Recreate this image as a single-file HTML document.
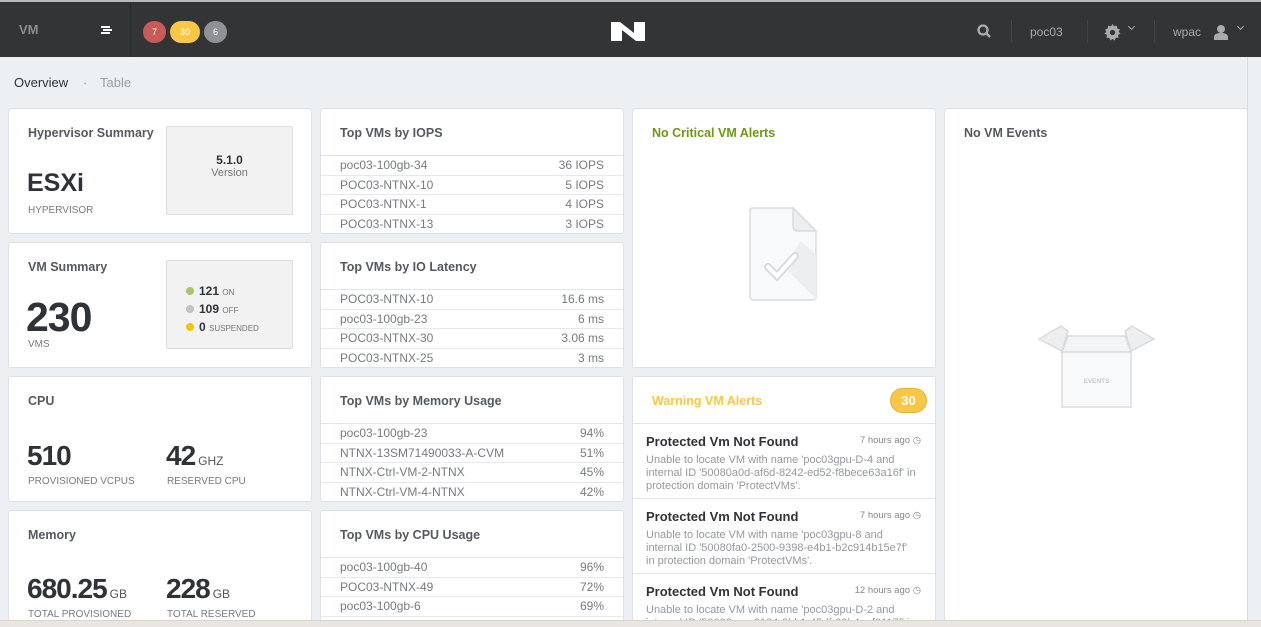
<!DOCTYPE html>
<html><head><meta charset="utf-8"><style>
*{box-sizing:border-box;margin:0;padding:0}
html,body{width:1261px;height:627px;overflow:hidden}
body{background:#edf0f3;font-family:"Liberation Sans",sans-serif;position:relative;color:#333}
.hdr{position:absolute;left:0;top:0;width:1261px;height:57px;background:#333436;border-top:2px solid #b8b8b8}
.ab{position:absolute}
.card{position:absolute;background:#fff;border:1px solid #dde1e5;border-radius:3px;overflow:hidden}
.t{position:absolute;left:19px;top:17px;font-size:12.5px;font-weight:bold;color:#555a60}
.tbl{position:absolute;left:0;right:0;top:46px;border-top:1px solid #e2e5e8}
.tbl div{height:19.6px;border-bottom:1px solid #e6e8eb;padding:0 19px;font-size:12px;color:#777b80;line-height:19px;display:flex;justify-content:space-between}
.big{font-weight:bold;color:#2f3338;letter-spacing:-1px}
.u{font-size:12px;font-weight:normal;color:#555;letter-spacing:0;margin-left:3px}
.lab{font-size:10px;color:#777b80}
.alert{position:absolute;left:0;right:0;height:75px;border-bottom:1px solid #e2e5e8;padding:9px 13px}
.alert b{font-size:13px;color:#2f3338}
.alert .tm{position:absolute;right:14px;top:11px;font-size:9.5px;color:#888}
.alert p{font-size:11px;color:#95999e;line-height:13px;margin-top:3px;width:270px}
.chev{position:absolute;top:22px;width:5px;height:5px;border-right:1.3px solid #a8abaf;border-bottom:1.3px solid #a8abaf;transform:rotate(45deg)}
</style></head><body>
<div class="hdr">
 <div class="ab" style="left:19px;top:20px;color:#8a8d91;font-size:13px;font-weight:bold">VM</div>
 <div class="ab" style="left:101px;top:24px;width:9px;height:2px;background:#fff;box-shadow:2px 3px 0 #fff,0 6px 0 #fff"></div>
 <div class="ab" style="left:130px;top:0;width:1px;height:55px;background:#2a2b2d"></div>
 <div class="ab" style="left:143px;top:19px;width:23px;height:22px;border-radius:11px;background:#c95a5a;color:#fff;font-size:9px;text-align:center;line-height:22px">7</div>
 <div class="ab" style="left:170px;top:19px;width:30px;height:22px;border-radius:11px;background:#f8c745;color:#fff;font-size:9px;text-align:center;line-height:22px">30</div>
 <div class="ab" style="left:204px;top:19px;width:23px;height:22px;border-radius:11px;background:#8e9195;color:#fff;font-size:9px;text-align:center;line-height:22px">6</div>
 <svg class="ab" style="left:611px;top:20px" width="34" height="19"><path d="M0 0h9l14 11V0h11v19h-9L11 8v11H0z" fill="#fff"/></svg>
 <svg class="ab" style="left:977px;top:22px" width="15" height="15"><circle cx="6" cy="6" r="4.5" stroke="#a8abaf" stroke-width="2.3" fill="none"/><path d="M9 9l4 4" stroke="#a8abaf" stroke-width="2.5"/></svg>
 <div class="ab" style="left:1011px;top:18px;width:1px;height:22px;background:#444"></div>
 <div class="ab" style="left:1030px;top:23px;color:#a8abaf;font-size:12px">poc03</div>
 <div class="ab" style="left:1087px;top:18px;width:1px;height:22px;background:#444"></div>
 <svg class="ab" style="left:1104px;top:22px" width="17" height="17" viewBox="0 0 16 16"><path d="M8 0l1.5 2.2 2.6-.8.3 2.7 2.6.9-1.2 2.4L15.6 9l-2.4 1.2.5 2.7-2.7.1-1 2.5L8 14l-2 1.5-1-2.5-2.7-.1.5-2.7L.4 9l1.8-1.6L1 5l2.6-.9.3-2.7 2.6.8z" fill="#a8abaf"/><circle cx="8" cy="8" r="2.5" fill="#333436"/></svg>
 <div class="chev" style="left:1129px"></div>
 <div class="ab" style="left:1154px;top:18px;width:1px;height:22px;background:#444"></div>
 <div class="ab" style="left:1173px;top:23px;color:#a8abaf;font-size:12px">wpac</div>
 <svg class="ab" style="left:1213px;top:22px" width="16" height="16"><circle cx="8" cy="5" r="4" fill="#a8abaf"/><path d="M1 16v-3c0-3 3-4 7-4s7 1 7 4v3z" fill="#a8abaf"/></svg>
 <div class="chev" style="left:1238px"></div>
</div>
<div class="ab" style="left:14px;top:75px;font-size:13px;color:#2f3338">Overview</div>
<div class="ab" style="left:83px;top:75px;font-size:13px;color:#999">·</div>
<div class="ab" style="left:100px;top:75px;font-size:13px;color:#9a9ea3">Table</div>

<div class="card" style="left:8px;top:108px;width:304px;height:126px">
 <div class="t">Hypervisor Summary</div>
 <div class="ab big" style="left:18px;top:60px;font-size:25px;letter-spacing:0">ESXi</div>
 <div class="ab lab" style="left:19px;top:96px">HYPERVISOR</div>
 <div class="ab" style="left:157px;top:17px;width:127px;height:89px;background:#f2f2f2;border:1px solid #ddd;border-radius:2px;text-align:center;padding-top:26px"><div style="font-size:12px;font-weight:bold;color:#2f3338">5.1.0</div><div style="font-size:11px;color:#777">Version</div></div>
</div>
<div class="card" style="left:8px;top:242px;width:304px;height:126px">
 <div class="t">VM Summary</div>
 <div class="ab big" style="left:17px;top:51px;font-size:41px">230</div>
 <div class="ab lab" style="left:19px;top:96px">VMS</div>
 <div class="ab" style="left:157px;top:17px;width:127px;height:89px;background:#f2f2f2;border:1px solid #ddd;border-radius:2px;padding:22px 0 0 19px;font-size:12px;line-height:16px;font-weight:bold;color:#2f3338">
  <div><span style="display:inline-block;width:8px;height:8px;border-radius:4px;background:#a8c66c;margin-right:5px"></span>121 <span style="font-size:8px;font-weight:normal;color:#777">ON</span></div>
  <div><span style="display:inline-block;width:8px;height:8px;border-radius:4px;background:#c3c3c3;margin-right:5px"></span>109 <span style="font-size:8px;font-weight:normal;color:#777">OFF</span></div>
  <div><span style="display:inline-block;width:8px;height:8px;border-radius:4px;background:#f3c500;margin-right:5px"></span>0 <span style="font-size:8px;font-weight:normal;color:#777">SUSPENDED</span></div>
 </div>
</div>
<div class="card" style="left:8px;top:376px;width:304px;height:126px">
 <div class="t">CPU</div>
 <div class="ab big" style="left:18px;top:63px;font-size:28px">510</div>
 <div class="ab lab" style="left:19px;top:99px">PROVISIONED VCPUS</div>
 <div class="ab big" style="left:157px;top:63px;font-size:28px">42<span class="u">GHZ</span></div>
 <div class="ab lab" style="left:158px;top:99px">RESERVED CPU</div>
</div>
<div class="card" style="left:8px;top:510px;width:304px;height:130px">
 <div class="t">Memory</div>
 <div class="ab big" style="left:18px;top:62px;font-size:28px">680.25<span class="u">GB</span></div>
 <div class="ab lab" style="left:19px;top:98px">TOTAL PROVISIONED</div>
 <div class="ab big" style="left:157px;top:62px;font-size:28px">228<span class="u">GB</span></div>
 <div class="ab lab" style="left:158px;top:98px">TOTAL RESERVED</div>
</div>

<div class="card" style="left:320px;top:108px;width:304px;height:126px">
 <div class="t">Top VMs by IOPS</div>
 <div class="tbl"><div><span>poc03-100gb-34</span><span>36 IOPS</span></div><div><span>POC03-NTNX-10</span><span>5 IOPS</span></div><div><span>POC03-NTNX-1</span><span>4 IOPS</span></div><div><span>POC03-NTNX-13</span><span>3 IOPS</span></div></div>
</div>
<div class="card" style="left:320px;top:242px;width:304px;height:126px">
 <div class="t">Top VMs by IO Latency</div>
 <div class="tbl"><div><span>POC03-NTNX-10</span><span>16.6 ms</span></div><div><span>poc03-100gb-23</span><span>6 ms</span></div><div><span>POC03-NTNX-30</span><span>3.06 ms</span></div><div><span>POC03-NTNX-25</span><span>3 ms</span></div></div>
</div>
<div class="card" style="left:320px;top:376px;width:304px;height:126px">
 <div class="t">Top VMs by Memory Usage</div>
 <div class="tbl"><div><span>poc03-100gb-23</span><span>94%</span></div><div><span>NTNX-13SM71490033-A-CVM</span><span>51%</span></div><div><span>NTNX-Ctrl-VM-2-NTNX</span><span>45%</span></div><div><span>NTNX-Ctrl-VM-4-NTNX</span><span>42%</span></div></div>
</div>
<div class="card" style="left:320px;top:510px;width:304px;height:130px">
 <div class="t">Top VMs by CPU Usage</div>
 <div class="tbl"><div><span>poc03-100gb-40</span><span>96%</span></div><div><span>POC03-NTNX-49</span><span>72%</span></div><div><span>poc03-100gb-6</span><span>69%</span></div><div><span>POC03-NTNX-19</span><span>56%</span></div></div>
</div>

<div class="card" style="left:632px;top:108px;width:304px;height:260px">
 <div class="t" style="color:#6b9a12">No Critical VM Alerts</div>
 <svg class="ab" style="left:116px;top:98px" width="72" height="94"><path d="M3 1h41l23 23v66a3 3 0 0 1-3 3H4a3 3 0 0 1-3-3V4a3 3 0 0 1 2-3z" fill="#f8f9fa" stroke="#d9dcdf" stroke-width="1.5"/><path d="M44 1v18a5 5 0 0 0 5 5h18z" fill="#eceef0" stroke="#d9dcdf" stroke-width="1.5"/><path d="M35 60l32 32V48L52 34z" fill="#eceef0"/><path d="M19 60l9 9 18-20" stroke="#d9dcdf" stroke-width="8" fill="none" stroke-linecap="round"/><path d="M19 60l9 9 18-20" stroke="#fff" stroke-width="4" fill="none" stroke-linecap="round"/></svg>
</div>
<div class="card" style="left:632px;top:376px;width:304px;height:260px">
 <div class="t" style="color:#f8c745;top:17px">Warning VM Alerts</div>
 <div class="ab" style="left:257px;top:11px;width:37px;height:25px;border-radius:13px;background:#f8c745;border:1px solid #e4b43a;color:#fff;font-weight:bold;font-size:13px;text-align:center;line-height:23px">30</div>
 <div class="ab" style="left:0;right:0;top:46px;border-top:1px solid #e2e5e8"></div>
 <div class="alert" style="top:47px"><b>Protected Vm Not Found</b><span class="tm">7 hours ago ◷</span><p>Unable to locate VM with name 'poc03gpu-D-4 and internal ID '50080a0d-af6d-8242-ed52-f8bece63a16f' in protection domain 'ProtectVMs'.</p></div>
 <div class="alert" style="top:122px"><b>Protected Vm Not Found</b><span class="tm">7 hours ago ◷</span><p>Unable to locate VM with name 'poc03gpu-8 and internal ID '50080fa0-2500-9398-e4b1-b2c914b15e7f' in protection domain 'ProtectVMs'.</p></div>
 <div class="alert" style="top:197px"><b>Protected Vm Not Found</b><span class="tm">12 hours ago ◷</span><p>Unable to locate VM with name 'poc03gpu-D-2 and internal ID '50083eae-2134-9bb1-45df-09b4eef0117f' in</p></div>
</div>

<div class="card" style="left:944px;top:108px;width:304px;height:530px">
 <div class="t">No VM Events</div>
 <svg class="ab" style="left:93px;top:216px" width="118" height="84"><path d="M23 1L1 14l23 12 6-20z" fill="#eceef0" stroke="#d9dcdf" stroke-width="1.5"/><path d="M94 1l22 13-23 12-6-20z" fill="#eceef0" stroke="#d9dcdf" stroke-width="1.5"/><path d="M30 11h57l6 16H24z" fill="#f3f4f6" stroke="#d9dcdf" stroke-width="1.5"/><rect x="24" y="27" width="69" height="55" fill="#f8f9fa" stroke="#d9dcdf" stroke-width="1.5"/><text x="58.5" y="58" font-size="6.5" font-family="Liberation Sans" font-weight="bold" fill="#c8ccd0" text-anchor="middle">EVENTS</text></svg>
</div>
<div class="ab" style="left:1247px;top:57px;width:1px;height:570px;background:#d9dcdf"></div>
<div class="ab" style="left:0;top:620px;width:1261px;height:7px;background:#e9e6e2;border-top:1px solid #d8d4cf"></div>
</body></html>
